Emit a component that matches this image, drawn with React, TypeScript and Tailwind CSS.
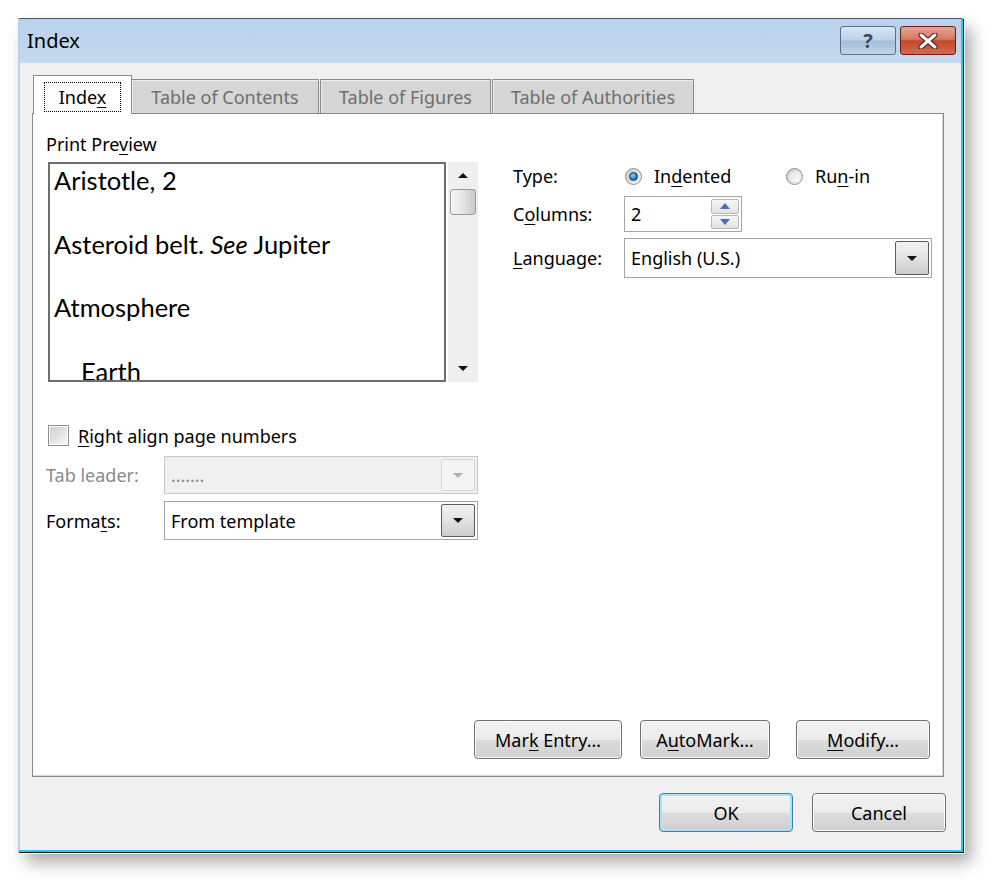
import React from "react";

const ui = { fontFamily: '"Noto Sans", "Open Sans", sans-serif' };
const preview = { fontFamily: 'Lato, "Open Sans", sans-serif' };

function Arrow({ dir = "down", color = "#111" }: { dir?: "up" | "down"; color?: string }) {
  return (
    <svg width="12" height="7" viewBox="0 0 12 7">
      {dir === "down" ? <path d="M1 1h10L6 6z" fill={color} /> : <path d="M1 6h10L6 1z" fill={color} />}
    </svg>
  );
}

function Select({ value, disabled = false, className = "" }: { value: string; disabled?: boolean; className?: string }) {
  return (
    <div
      className={`flex items-stretch border p-[2px] ${
        disabled ? "border-[#c8c8c8] bg-[#f0f0f0] text-[#8a8a8a]" : "border-[#a6a6a6] bg-white text-black"
      } ${className}`}
    >
      <div className="flex flex-1 items-center pl-[4px]">{value}</div>
      <div
        className={`flex w-[34px] items-center justify-center rounded-[2px] border ${
          disabled
            ? "border-[#d8d8d8] bg-[#f4f4f4]"
            : "border-[#5c5c5c] bg-gradient-to-b from-[#f3f3f3] via-[#e2e2e2] to-[#cdcdcd]"
        }`}
      >
        <Arrow color={disabled ? "#b0b0b0" : "#111"} />
      </div>
    </div>
  );
}

function Button({ children, focused = false, className = "" }: { children: React.ReactNode; focused?: boolean; className?: string }) {
  return (
    <div
      className={`flex h-[39px] items-center justify-center rounded-[4px] border text-black ${
        focused
          ? "border-[#3c7fb1] shadow-[inset_0_0_0_2px_#a9e1f7]"
          : "border-[#707070] shadow-[inset_0_0_0_1px_#fbfbfb]"
      } bg-[linear-gradient(#f2f2f2_0%,#ebebeb_50%,#dddddd_51%,#cfcfcf_100%)] ${className}`}
    >
      {children}
    </div>
  );
}

function Radio({ checked }: { checked?: boolean }) {
  return (
    <div className="flex h-[17px] w-[17px] items-center justify-center rounded-full border border-[#8e8f8f] bg-gradient-to-br from-[#c8c8c8] to-[#f6f6f6]">
      {checked ? (
        <div className="h-[9px] w-[9px] rounded-full border border-[#1e3a5c] bg-[radial-gradient(circle_at_40%_35%,#7fd3ff,#1b7fc4_60%,#0d3f73)]" />
      ) : (
        <div className="h-[11px] w-[11px] rounded-full bg-gradient-to-br from-[#e2e2e2] to-[#fdfdfd]" />
      )}
    </div>
  );
}

export default function App() {
  return (
    <div className="h-[886px] w-[1000px] overflow-hidden bg-white pl-[18px] pt-[18px] text-[18px] leading-none" style={ui}>
      <div className="flex h-[834px] w-[945px] flex-col border-b-[2px] border-l-[2px] border-r-[2px] border-t border-b-[#30c4ea] border-l-[#b8d0eb] border-r-[#30c4ea] border-t-[#4a5a6e] shadow-[1px_1px_0_#1a1a1a,2px_2px_0_#f4f4f4,8px_10px_16px_rgba(0,0,0,0.35)]">
        {/* title bar */}
        <div className="flex h-[44px] items-center justify-between bg-gradient-to-b from-[#b9d1ea] to-[#c4d9ef] pl-[7px] pr-[5px]">
          <span className="text-[20px] text-black">Index</span>
          <div className="flex gap-[4px] self-start pt-[7px]">
            <div className="flex h-[29px] w-[56px] items-center justify-center rounded-[3px] border border-[#5b6f88] bg-[linear-gradient(#d9e6f4_0%,#bfd2e9_48%,#a6bcd8_52%,#c2d4ea_100%)] text-[20px] font-bold text-[#3a4a5e]">
              ?
            </div>
            <div className="flex h-[29px] w-[56px] items-center justify-center rounded-[3px] border border-[#6b1d14] bg-[linear-gradient(#e8a493_0%,#d47a62_45%,#c2462a_52%,#d66a4e_100%)]">
              <svg width="22" height="16" viewBox="0 0 22 16">
                <path d="M4 2l14 12M18 2L4 14" stroke="#3d1a14" strokeWidth="5" strokeLinecap="round" />
                <path d="M4 2l14 12M18 2L4 14" stroke="#ffffff" strokeWidth="3" strokeLinecap="round" />
              </svg>
            </div>
          </div>
        </div>

        {/* body */}
        <div className="flex flex-1 flex-col bg-[#f0f0f0] pl-[12px] pr-[17px] pt-[12px]">
          {/* tabs */}
          <div className="flex items-end pl-[1px]">
            <div className="relative z-10 -mb-px flex h-[39px] w-[99px] items-center justify-center border border-b-0 border-[#8a8a8a] bg-white pt-[3px]">
              <span className="border border-dotted border-black px-[14px] py-[5px]">
                Inde<span className="underline underline-offset-[3px]">x</span>
              </span>
            </div>
            <div className="flex h-[34px] w-[187px] items-center justify-center border border-b-0 border-l-0 border-[#8a8a8a] bg-[#d6d6d6] text-[#6e6e6e] shadow-[inset_1px_1px_0_#eeeeee]">
              Table of Contents
            </div>
            <div className="ml-[1px] flex h-[34px] w-[171px] items-center justify-center border border-b-0 border-[#8a8a8a] bg-[#d6d6d6] text-[#6e6e6e] shadow-[inset_1px_1px_0_#eeeeee]">
              Table of Figures
            </div>
            <div className="ml-[1px] flex h-[34px] w-[202px] items-center justify-center border border-b-0 border-[#8a8a8a] bg-[#d6d6d6] text-[#6e6e6e] shadow-[inset_1px_1px_0_#eeeeee]">
              Table of Authorities
            </div>
          </div>

          {/* panel */}
          <div className="flex h-[664px] flex-col border border-[#8a8a8a] bg-white pl-[13px] pr-[13px] pt-[21px] shadow-[inset_-1px_-1px_0_#d8d8d8]">
            <div className="flex">
              {/* left column */}
              <div className="flex w-[432px] flex-col">
                <div className="mb-[9px]">
                  Print Pre<span className="underline underline-offset-[3px]">v</span>iew
                </div>
                <div className="ml-[2px] flex h-[220px] gap-[2px]">
                  <div
                    className="flex w-[400px] flex-col overflow-hidden border-2 border-[#6e6e6e] pl-[4px] pt-[8px] text-[25.5px] leading-[63.5px] text-black"
                    style={preview}
                  >
                    <div className="-mt-[23px]">Aristotle, 2</div>
                    <div>
                      Asteroid belt. <i>See</i> Jupiter
                    </div>
                    <div>Atmosphere</div>
                    <div className="pl-[27px]">Earth</div>
                  </div>
                  <div className="flex w-[30px] flex-col items-center bg-[#efefef] pt-[10px]">
                    <Arrow dir="up" />
                    <div className="mt-[10px] h-[26px] w-[26px] rounded-[3px] border border-[#9a9a9a] bg-gradient-to-r from-[#f6f6f6] via-[#e4e4e4] to-[#c9c9c9]" />
                    <div className="flex-1" />
                    <div className="mb-[10px]">
                      <Arrow />
                    </div>
                  </div>
                </div>

                <div className="mt-[43px] flex items-center gap-[9px] pl-[2px]">
                  <div className="flex h-[21px] w-[21px] items-center justify-center border border-[#8e8f8f] bg-white">
                    <div className="h-[17px] w-[17px] bg-gradient-to-br from-[#cfcfcf] to-[#f8f8f8]" />
                  </div>
                  <span>
                    <span className="underline underline-offset-[3px]">R</span>ight align page numbers
                  </span>
                </div>

                <div className="mt-[10px] flex items-center">
                  <span className="w-[118px] text-[#8a8a8a]">Tab leader:</span>
                  <Select value="……." disabled className="h-[38px] flex-1" />
                </div>
                <div className="mt-[7px] flex items-center">
                  <span className="w-[118px]">
                    Forma<span className="underline underline-offset-[3px]">t</span>s:
                  </span>
                  <Select value="From template" className="h-[39px] flex-1" />
                </div>
              </div>

              {/* right column */}
              <div className="ml-[35px] flex flex-1 flex-col pt-[31px]">
                <div className="flex h-[20px] items-center">
                  <span className="w-[112px]">Type:</span>
                  <Radio checked />
                  <span className="ml-[12px] w-[132px]">
                    In<span className="underline underline-offset-[3px]">d</span>ented
                  </span>
                  <Radio />
                  <span className="ml-[12px]">
                    Ru<span className="underline underline-offset-[3px]">n</span>-in
                  </span>
                </div>
                <div className="mt-[10px] flex items-center">
                  <span className="w-[111px]">
                    C<span className="underline underline-offset-[3px]">o</span>lumns:
                  </span>
                  <div className="flex h-[36px] w-[118px] border border-[#a6a6a6] bg-white p-[2px]">
                    <div className="flex flex-1 items-center pl-[4px]">2</div>
                    <div className="flex w-[28px] flex-col gap-[1px]">
                      <div className="flex flex-1 items-center justify-center rounded-[2px] border border-[#b8b8b8] bg-gradient-to-b from-[#f6f6f6] to-[#e2e2e2]">
                        <svg width="10" height="6" viewBox="0 0 10 6"><path d="M0 6h10L5 0z" fill="#4a6fb8" /></svg>
                      </div>
                      <div className="flex flex-1 items-center justify-center rounded-[2px] border border-[#b8b8b8] bg-gradient-to-b from-[#f6f6f6] to-[#e2e2e2]">
                        <svg width="10" height="6" viewBox="0 0 10 6"><path d="M0 0h10L5 6z" fill="#4a6fb8" /></svg>
                      </div>
                    </div>
                  </div>
                </div>
                <div className="mt-[6px] flex items-center">
                  <span className="w-[111px]">
                    <span className="underline underline-offset-[3px]">L</span>anguage:
                  </span>
                  <Select value="English (U.S.)" className="h-[40px] w-[308px]" />
                </div>
              </div>
            </div>

            <div className="flex-1" />
            <div className="mb-[17px] flex justify-end">
              <Button className="w-[148px]">
                Mar<span className="underline underline-offset-[3px]">k</span>&nbsp;Entry…
              </Button>
              <Button className="ml-[18px] w-[130px]">
                A<span className="underline underline-offset-[3px]">u</span>toMark…
              </Button>
              <Button className="ml-[26px] w-[134px]">
                <span className="underline underline-offset-[3px]">M</span>odify…
              </Button>
            </div>
          </div>

          {/* dialog buttons */}
          <div className="-mr-[2px] mt-[16px] flex justify-end gap-[19px]">
            <Button focused className="w-[134px]">OK</Button>
            <Button className="w-[134px]">Cancel</Button>
          </div>
        </div>
      </div>
    </div>
  );
}
